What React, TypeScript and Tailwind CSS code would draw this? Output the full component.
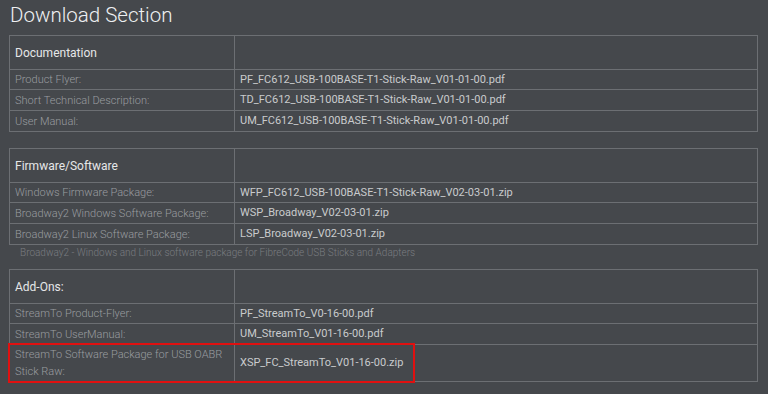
import React from "react";

type Row = { label: string; value: string; tall?: boolean; highlight?: boolean };

function Section({ title, rows }: { title: string; rows: Row[] }) {
  return (
    <table className="w-[749px] border-collapse table-fixed">
      <colgroup>
        <col className="w-[225px]" />
        <col />
      </colgroup>
      <tbody>
        <tr className="h-[34px]">
          <td className="border border-[#6c6f73] px-[5px] text-[12px] text-[#e6e7e8] align-middle">{title}</td>
          <td className="border border-[#6c6f73]"></td>
        </tr>
        {rows.map((r, i) => (
          <tr key={r.label} className={r.tall ? "h-[37px]" : i === 0 ? "h-[20px]" : "h-[21px]"}>
            <td className={"border border-[#6c6f73] px-[5px] py-0 text-[11px] leading-[17px] font-light text-[#9a9da0] align-middle " + (r.highlight ? "relative" : "")}>
              {r.label}
              {r.highlight ? (
                <div className="absolute left-[-2px] top-[-2px] w-[407px] bottom-[-2px] border-2 border-[#e01010] pointer-events-none" />
              ) : null}
            </td>
            <td className="border border-[#6c6f73] px-[5px] py-0 text-[11px] leading-[16px] text-[#c9cbcd] align-middle">{r.value}</td>
          </tr>
        ))}
      </tbody>
    </table>
  );
}

export default function App() {
  return (
    <div
      className="w-[768px] h-[394px] bg-[#45484c] px-[9px] overflow-hidden"
      style={{ fontFamily: "Roboto, 'Open Sans', sans-serif" }}
    >
      <div className="h-[35px] pt-0 pl-[1px] text-[20.5px] leading-[30px] font-light text-[#eef0f2]">Download Section</div>
      <Section
        title="Documentation"
        rows={[
          { label: "Product Flyer:", value: "PF_FC612_USB-100BASE-T1-Stick-Raw_V01-01-00.pdf" },
          { label: "Short Technical Description:", value: "TD_FC612_USB-100BASE-T1-Stick-Raw_V01-01-00.pdf" },
          { label: "User Manual:", value: "UM_FC612_USB-100BASE-T1-Stick-Raw_V01-01-00.pdf" },
        ]}
      />
      <div className="h-[16px]" />
      <Section
        title="Firmware/Software"
        rows={[
          { label: "Windows Firmware Package:", value: "WFP_FC612_USB-100BASE-T1-Stick-Raw_V02-03-01.zip" },
          { label: "Broadway2 Windows Software Package:", value: "WSP_Broadway_V02-03-01.zip" },
          { label: "Broadway2 Linux Software Package:", value: "LSP_Broadway_V02-03-01.zip" },
        ]}
      />
      <div className="h-[24px] pl-[11px] pt-[1px] text-[10px] leading-[14px] font-light text-[#7a7d81]">
        Broadway2 - Windows and Linux software package for FibreCode USB Sticks and Adapters
      </div>
      <Section
        title="Add-Ons:"
        rows={[
          { label: "StreamTo Product-Flyer:", value: "PF_StreamTo_V0-16-00.pdf" },
          { label: "StreamTo UserManual:", value: "UM_StreamTo_V01-16-00.pdf" },
          {
            label: "StreamTo Software Package for USB OABR Stick Raw:",
            value: "XSP_FC_StreamTo_V01-16-00.zip",
            tall: true,
            highlight: true,
          },
        ]}
      />
    </div>
  );
}
